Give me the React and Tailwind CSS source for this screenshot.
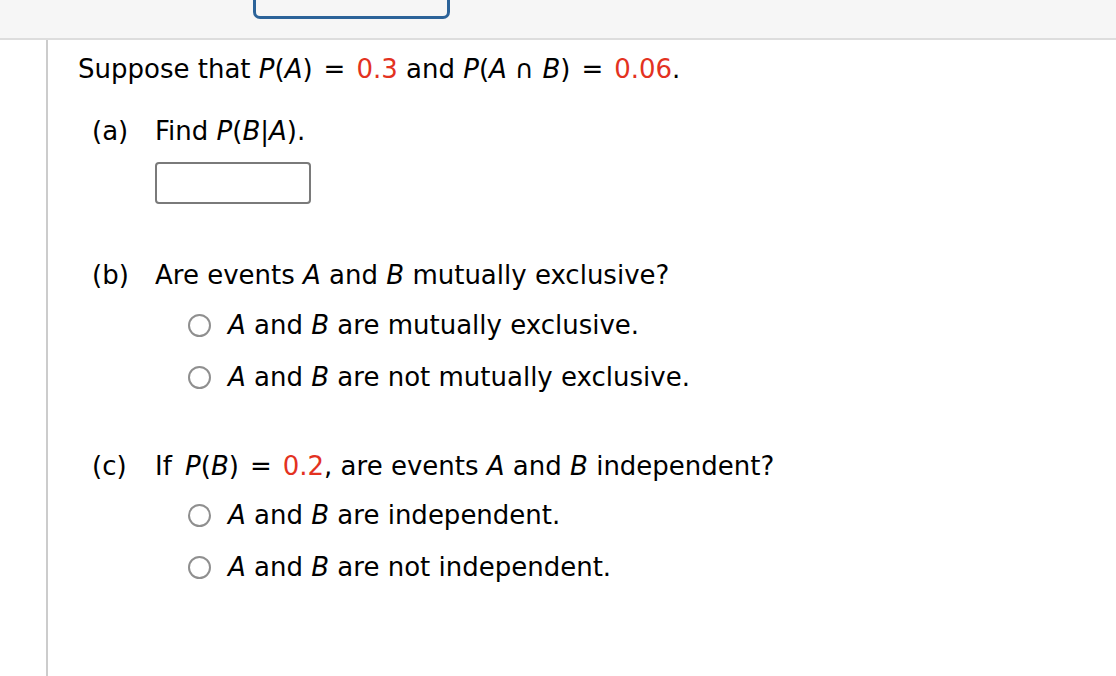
import React from 'react';

const Red = ({ children }) => <span className="text-[#e3321f]">{children}</span>;
const I = ({ children }) => <i>{children}</i>;
const Eq = () => <span className="mx-[11px]">=</span>;

function Radio({ children }) {
  return (
    <label className="flex items-center h-[30px]">
      <span className="w-[23px] h-[23px] rounded-full border-2 border-[#8f8f8f] bg-white mr-[17px] shrink-0" />
      <span>{children}</span>
    </label>
  );
}

function Part({ tag, title, children }) {
  return (
    <div className="flex pl-[14px]">
      <span className="w-[63px] shrink-0">{tag}</span>
      <div className="flex-1">
        <div className="h-[30px] flex items-center whitespace-nowrap">{title}</div>
        {children}
      </div>
    </div>
  );
}

export default function App() {
  return (
    <div className="w-[1116px] h-[676px] bg-white overflow-hidden text-black text-[26px] leading-[30px]" style={{ fontFamily: '"DejaVu Sans", Verdana, sans-serif' }}>
      {/* top bar */}
      <div className="h-[40px] bg-[#f6f6f6] border-b-2 border-[#dddddd]">
        <div className="ml-[253px] w-[197px] h-[19px] border-[3px] border-t-0 border-[#2c6399] rounded-b-[7px]" />
      </div>

      <div className="flex h-[636px]">
        <div className="w-[46px] shrink-0" />
        <div className="border-l-2 border-[#cccccc] flex-1 pl-[30px] pt-[14px]">
          <p className="h-[30px] flex items-center whitespace-nowrap">
            Suppose that&nbsp;<I>P</I>(<I>A</I>)<Eq /><Red>0.3</Red>&nbsp;and&nbsp;<I>P</I>(<I>A</I>&nbsp;∩&nbsp;<I>B</I>)<Eq /><Red>0.06</Red>.
          </p>

          <div className="mt-[32px]">
            <Part tag="(a)" title={<>Find&nbsp;<I>P</I>(<I>B</I>|<I>A</I>).</>}>
              <div className="mt-[16px] w-[156px] h-[42px] border-2 border-[#7a7a7a] rounded-[4px]" />
            </Part>
          </div>

          <div className="mt-[56px]">
            <Part tag="(b)" title={<>Are events&nbsp;<I>A</I>&nbsp;and&nbsp;<I>B</I>&nbsp;mutually exclusive?</>}>
              <div className="pl-[33px] mt-[20px] flex flex-col gap-[22px]">
                <Radio><I>A</I> and <I>B</I> are mutually exclusive.</Radio>
                <Radio><I>A</I> and <I>B</I> are not mutually exclusive.</Radio>
              </div>
            </Part>
          </div>

          <div className="mt-[59px]">
            <Part tag="(c)" title={<><span className="mr-[5px]">If</span>&nbsp;<I>P</I>(<I>B</I>)<Eq /><Red>0.2</Red>, are events&nbsp;<I>A</I>&nbsp;and&nbsp;<I>B</I>&nbsp;independent?</>}>
              <div className="pl-[33px] mt-[19px] flex flex-col gap-[22px]">
                <Radio><I>A</I> and <I>B</I> are independent.</Radio>
                <Radio><I>A</I> and <I>B</I> are not independent.</Radio>
              </div>
            </Part>
          </div>
        </div>
      </div>
    </div>
  );
}
